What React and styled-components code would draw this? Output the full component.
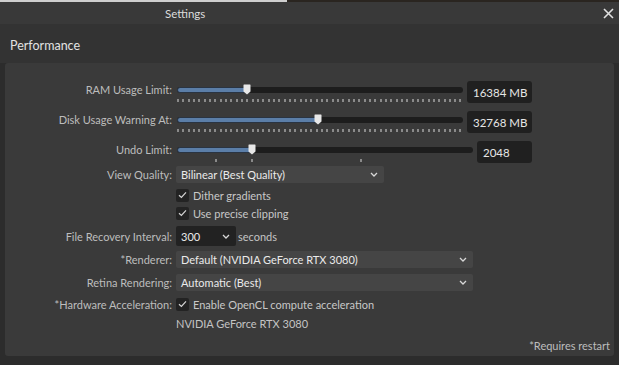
import React from "react";
import styled, { createGlobalStyle } from "styled-components";

const Global = createGlobalStyle`
  html, body { margin: 0; padding: 0; background: #2e2e2e; }
  body { font-family: "Segoe UI", Lato, "Noto Sans", sans-serif; font-size: 11px; color: #c4c4c4; }
  * { box-sizing: border-box; }
`;

const Window = styled.div`
  width: 619px;
  height: 365px;
  display: flex;
  flex-direction: column;
  background: #303030;
  overflow: hidden;
`;

const TopStrip = styled.div`
  height: 2px;
  display: flex;
`;

const StripPart = styled.div`
  width: ${p => p.w};
  background: ${p => p.c};
`;

const TitleBar = styled.div`
  height: 22px;
  background: #393939;
  display: flex;
  align-items: center;
  justify-content: space-between;
  padding: 0 5px 0 165px;
  color: #dcdcdc;
  font-size: 11.5px;
`;

const Header = styled.div`
  height: 39px;
  display: flex;
  align-items: center;
  padding: 3px 0 0 10px;
  font-size: 12.5px;
  color: #e2e2e2;
  background: #333333;
`;

const Frame = styled.div`
  flex: 1;
  padding: 0 5px 9px 5px;
  background: #2c2c2c;
`;

const Panel = styled.div`
  height: 100%;
  background: #3a3a3a;
  border-radius: 3px;
  padding: 18px 4px 0 0;
  display: flex;
  flex-direction: column;
`;

const Row = styled.div`
  display: grid;
  grid-template-columns: 167px 1fr;
  column-gap: 4px;
  align-items: ${p => (p.top ? "start" : "center")};
  height: ${p => p.h}px;
  margin-top: ${p => p.mt || 0}px;
`;

const Label = styled.div`
  text-align: right;
  white-space: nowrap;
  color: #bdbdbd;
  line-height: ${p => (p.lh ? p.lh + "px" : "normal")};
`;

const Controls = styled.div`
  display: flex;
  align-items: ${p => (p.top ? "flex-start" : "center")};
  gap: ${p => p.gap || 0}px;
`;

const SliderWrap = styled.div`
  width: ${p => p.w}px;
  display: flex;
  flex-direction: column;
  padding-top: 6px;
  margin-left: 1px;
`;

const Track = styled.div`
  position: relative;
  height: 6px;
  border-radius: 3px;
  background: #1d1d1d;
`;

const Fill = styled.div`
  height: 100%;
  border-radius: 3px;
  background: #5b7ea8;
  border: 1px solid #2a3442;
`;

const Thumb = styled.svg`
  position: absolute;
  top: -3px;
  margin-left: -4px;
`;

const Ticks = styled.div`
  margin-top: 6px;
  height: 3px;
  width: ${p => p.w}px;
  background: repeating-linear-gradient(to right, #8a8a8a 0 2px, transparent 2px 5.33px);
`;

const SparseTicks = styled.div`
  margin-top: 6px;
  height: 3px;
  display: flex;
`;

const Tick = styled.div`
  width: 2px;
  height: 3px;
  background: #8a8a8a;
  margin-left: ${p => p.ml}px;
`;

const ValueBox = styled.div`
  width: ${p => p.w}px;
  height: 22px;
  margin-left: ${p => p.ml}px;
  border-radius: 3px;
  background: #202020;
  color: #e6e6e6;
  font-size: 11.5px;
  display: flex;
  align-items: center;
  padding-left: 6px;
`;

const Select = styled.div`
  width: ${p => p.w}px;
  height: ${p => p.h || 17}px;
  border-radius: 2px;
  background: ${p => (p.dark ? "#222222" : "#454545")};
  color: #eaeaea;
  display: flex;
  align-items: center;
  justify-content: space-between;
  padding: 0 6px 0 5px;
  white-space: nowrap;
`;

const Check = styled.div`
  width: 13px;
  height: 13px;
  border-radius: 2px;
  background: #232323;
  display: flex;
  align-items: center;
  justify-content: center;
  flex-shrink: 0;
`;

const CheckText = styled.span`
  color: #c8c8c8;
  white-space: nowrap;
`;

const Plain = styled.span`
  color: #c4c4c4;
  white-space: nowrap;
`;

const Footer = styled.div`
  margin-top: 8px;
  height: 16px;
  text-align: right;
  color: #bdbdbd;
`;

const Chevron = () => (
  <svg width="8" height="5" viewBox="0 0 8 5">
    <path d="M1 1 L4 4 L7 1" stroke="#d8d8d8" strokeWidth="1.3" fill="none" />
  </svg>
);

const Tickmark = () => (
  <svg width="9" height="8" viewBox="0 0 9 8">
    <path d="M1 4.2 L3.4 6.5 L8 1.3" stroke="#d6d6d6" strokeWidth="1.2" fill="none" />
  </svg>
);

const ThumbIcon = ({ at }) => (
  <Thumb width="8" height="11" viewBox="0 0 8 11" style={{ left: at }}>
    <path d="M0.5 1 Q0.5 0.5 1 0.5 L7 0.5 Q7.5 0.5 7.5 1 L7.5 7.5 L4 10.5 L0.5 7.5 Z" fill="#e8e8e8" />
  </Thumb>
);

const Slider = ({ label, width, pos, value, boxW, boxMl, ticks, mt }) => (
  <Row h={24} top mt={mt}>
    <Label lh={18}>{label}</Label>
    <Controls top>
      <SliderWrap w={width}>
        <Track>
          <Fill style={{ width: pos }} />
          <ThumbIcon at={pos} />
        </Track>
        {ticks ? (
          <SparseTicks>
            {ticks.map((t, i) => <Tick key={i} ml={t} />)}
          </SparseTicks>
        ) : (
          <Ticks w={width - 2} />
        )}
      </SliderWrap>
      <ValueBox w={boxW} ml={boxMl}>{value}</ValueBox>
    </Controls>
  </Row>
);

const CloseIcon = () => (
  <svg width="11" height="11" viewBox="0 0 11 11">
    <path d="M1 1 L10 10 M10 1 L1 10" stroke="#e0e0e0" strokeWidth="1.6" />
  </svg>
);

export default function App() {
  return (
    <>
      <Global />
      <Window>
        <TopStrip>
          <StripPart w="287px" c="#cfcfcf" />
          <StripPart w="332px" c="#2a2520" />
        </TopStrip>
        <TitleBar>
          <span>Settings</span>
          <CloseIcon />
        </TitleBar>
        <Header>Performance</Header>
        <Frame>
          <Panel>
            <Slider label="RAM Usage Limit:" width={286} pos={70} value="16384 MB" boxW={65} boxMl={4} mt={0} />
            <Slider label="Disk Usage Warning At:" width={286} pos={141} value="32768 MB" boxW={65} boxMl={4} mt={6} />
            <Slider label="Undo Limit:" width={296} pos={75} value="2048" boxW={55} boxMl={4} mt={6} ticks={[38, 34, 107]} />

            <Row h={17} mt={1}>
              <Label>View Quality:</Label>
              <Controls>
                <Select w={208}>
                  <span>Bilinear (Best Quality)</span>
                  <Chevron />
                </Select>
              </Controls>
            </Row>

            <Row h={16} mt={4}>
              <span />
              <Controls gap={4}>
                <Check><Tickmark /></Check>
                <CheckText>Dither gradients</CheckText>
              </Controls>
            </Row>

            <Row h={16} mt={2}>
              <span />
              <Controls gap={4}>
                <Check><Tickmark /></Check>
                <CheckText>Use precise clipping</CheckText>
              </Controls>
            </Row>

            <Row h={20} mt={5}>
              <Label>File Recovery Interval:</Label>
              <Controls gap={2}>
                <Select w={60} h={20} dark>
                  <span>300</span>
                  <Chevron />
                </Select>
                <Plain>seconds</Plain>
              </Controls>
            </Row>

            <Row h={17} mt={5}>
              <Label>*Renderer:</Label>
              <Controls>
                <Select w={297}>
                  <span>Default (NVIDIA GeForce RTX 3080)</span>
                  <Chevron />
                </Select>
              </Controls>
            </Row>

            <Row h={17} mt={6}>
              <Label>Retina Rendering:</Label>
              <Controls>
                <Select w={297}>
                  <span>Automatic (Best)</span>
                  <Chevron />
                </Select>
              </Controls>
            </Row>

            <Row h={16} mt={5}>
              <Label>*Hardware Acceleration:</Label>
              <Controls gap={4}>
                <Check><Tickmark /></Check>
                <CheckText>Enable OpenCL compute acceleration</CheckText>
              </Controls>
            </Row>

            <Row h={16} mt={3}>
              <span />
              <Controls>
                <Plain>NVIDIA GeForce RTX 3080</Plain>
              </Controls>
            </Row>

            <Footer>*Requires restart</Footer>
          </Panel>
        </Frame>
      </Window>
    </>
  );
}
